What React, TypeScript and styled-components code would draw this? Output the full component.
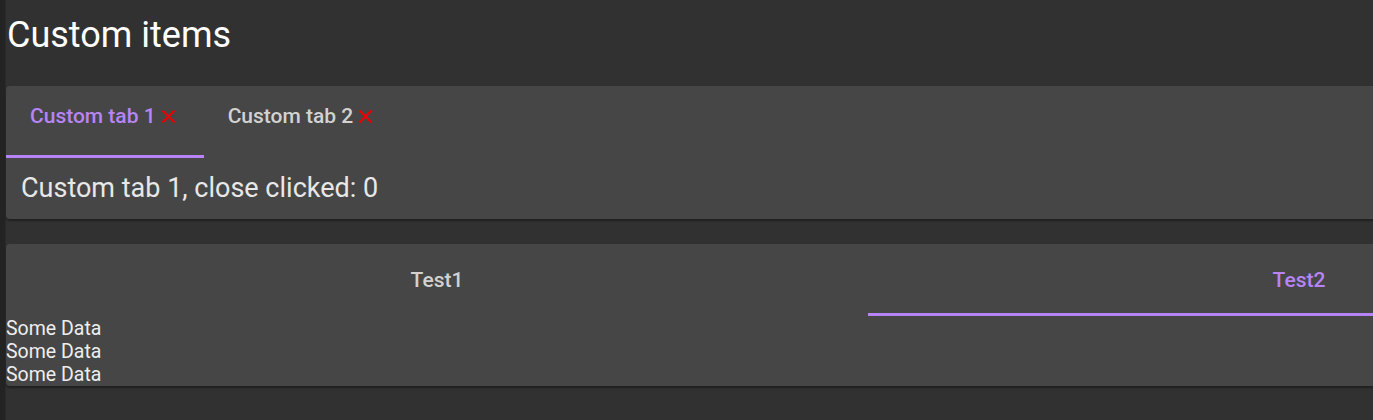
import React, { useState } from "react";
import styled, { createGlobalStyle } from "styled-components";

const Global = createGlobalStyle`
  html, body {
    margin: 0;
    padding: 0;
    background: #313131;
    overflow: hidden;
    font-family: Roboto, "Noto Sans", "Liberation Sans", sans-serif;
  }
`;

const Page = styled.div`
  display: flex;
  min-height: 420px;
  width: 1373px;
`;

const EdgeStrip = styled.div`
  flex: 0 0 5px;
  background: #232323;
  border-right: 1px solid #2a2a2a;
`;

const Main = styled.main`
  flex: 1;
  display: flex;
  flex-direction: column;
  min-width: 0;
`;

const Title = styled.h1`
  margin: 14px 0 30px 1px;
  font-size: 36px;
  font-weight: 400;
  line-height: 42px;
  color: #ffffff;
`;

const Card = styled.section<{ $width?: number }>`
  background: #464646;
  border-radius: 4px 0 0 4px;
  box-shadow: 0 2px 2px rgba(0, 0, 0, 0.35);
  width: ${(p) => (p.$width ? `${p.$width}px` : "auto")};
  flex: 0 0 auto;
  overflow: hidden;
`;

const TabBar = styled.div`
  display: flex;
  height: 72px;
`;

const Tab = styled.button<{ $active?: boolean; $stretch?: boolean; $raised?: boolean }>`
  position: relative;
  display: flex;
  align-items: center;
  justify-content: center;
  gap: 5px;
  flex: ${(p) => (p.$stretch ? "1 1 0" : "0 0 auto")};
  padding: 0 24px ${(p) => (p.$raised ? "12px" : "0")};
  height: 72px;
  border: none;
  background: transparent;
  font-family: inherit;
  font-size: 21px;
  font-weight: 500;
  color: ${(p) => (p.$active ? "#b784f7" : "#d2d2d2")};
  cursor: pointer;

  &::after {
    content: "";
    position: absolute;
    left: 0;
    right: 0;
    bottom: 0;
    height: 3px;
    background: ${(p) => (p.$active ? "#b784f7" : "transparent")};
  }
`;

const CloseButton = styled.span`
  display: inline-flex;
  margin-right: 4px;
`;

const CloseIcon = styled.svg`
  width: 15px;
  height: 15px;
  flex: 0 0 15px;
`;

const TabContent = styled.div`
  padding: 15px 15px;
  font-size: 27px;
  line-height: 31px;
  color: #e8e8e8;
`;

const Gap = styled.div`
  height: 25px;
`;

const DataList = styled.div`
  display: flex;
  flex-direction: column;
  padding-top: 1px;
`;

const DataLine = styled.div`
  font-size: 19.5px;
  line-height: 23px;
  color: #eeeeee;
`;

const Close = () => (
  <CloseIcon viewBox="0 0 15 15">
    <path d="M1.5 1.5 L13.5 13.5 M13.5 1.5 L1.5 13.5" stroke="#f00000" strokeWidth="2" fill="none" />
  </CloseIcon>
);

export default function App() {
  const [tab, setTab] = useState(0);
  const [tab2, setTab2] = useState(1);
  const [clicks, setClicks] = useState([0, 0]);

  return (
    <>
      <Global />
      <Page>
        <EdgeStrip />
        <Main>
          <Title>Custom items</Title>
          <Card $width={1724}>
            <TabBar>
              {["Custom tab 1", "Custom tab 2"].map((label, i) => (
                <Tab key={label} $raised $active={tab === i} onClick={() => setTab(i)}>
                  {label}
                  <CloseButton
                    onClick={(e) => {
                      e.stopPropagation();
                      setClicks((c) => c.map((v, j) => (j === i ? v + 1 : v)));
                    }}
                  >
                    <Close />
                  </CloseButton>
                </Tab>
              ))}
            </TabBar>
            <TabContent>
              Custom tab {tab + 1}, close clicked: {clicks[tab]}
            </TabContent>
          </Card>
          <Gap />
          <Card $width={1724}>
            <TabBar>
              {["Test1", "Test2"].map((label, i) => (
                <Tab key={label} $stretch $active={tab2 === i} onClick={() => setTab2(i)}>
                  {label}
                </Tab>
              ))}
            </TabBar>
            <DataList>
              <DataLine>Some Data</DataLine>
              <DataLine>Some Data</DataLine>
              <DataLine>Some Data</DataLine>
            </DataList>
          </Card>
        </Main>
      </Page>
    </>
  );
}
